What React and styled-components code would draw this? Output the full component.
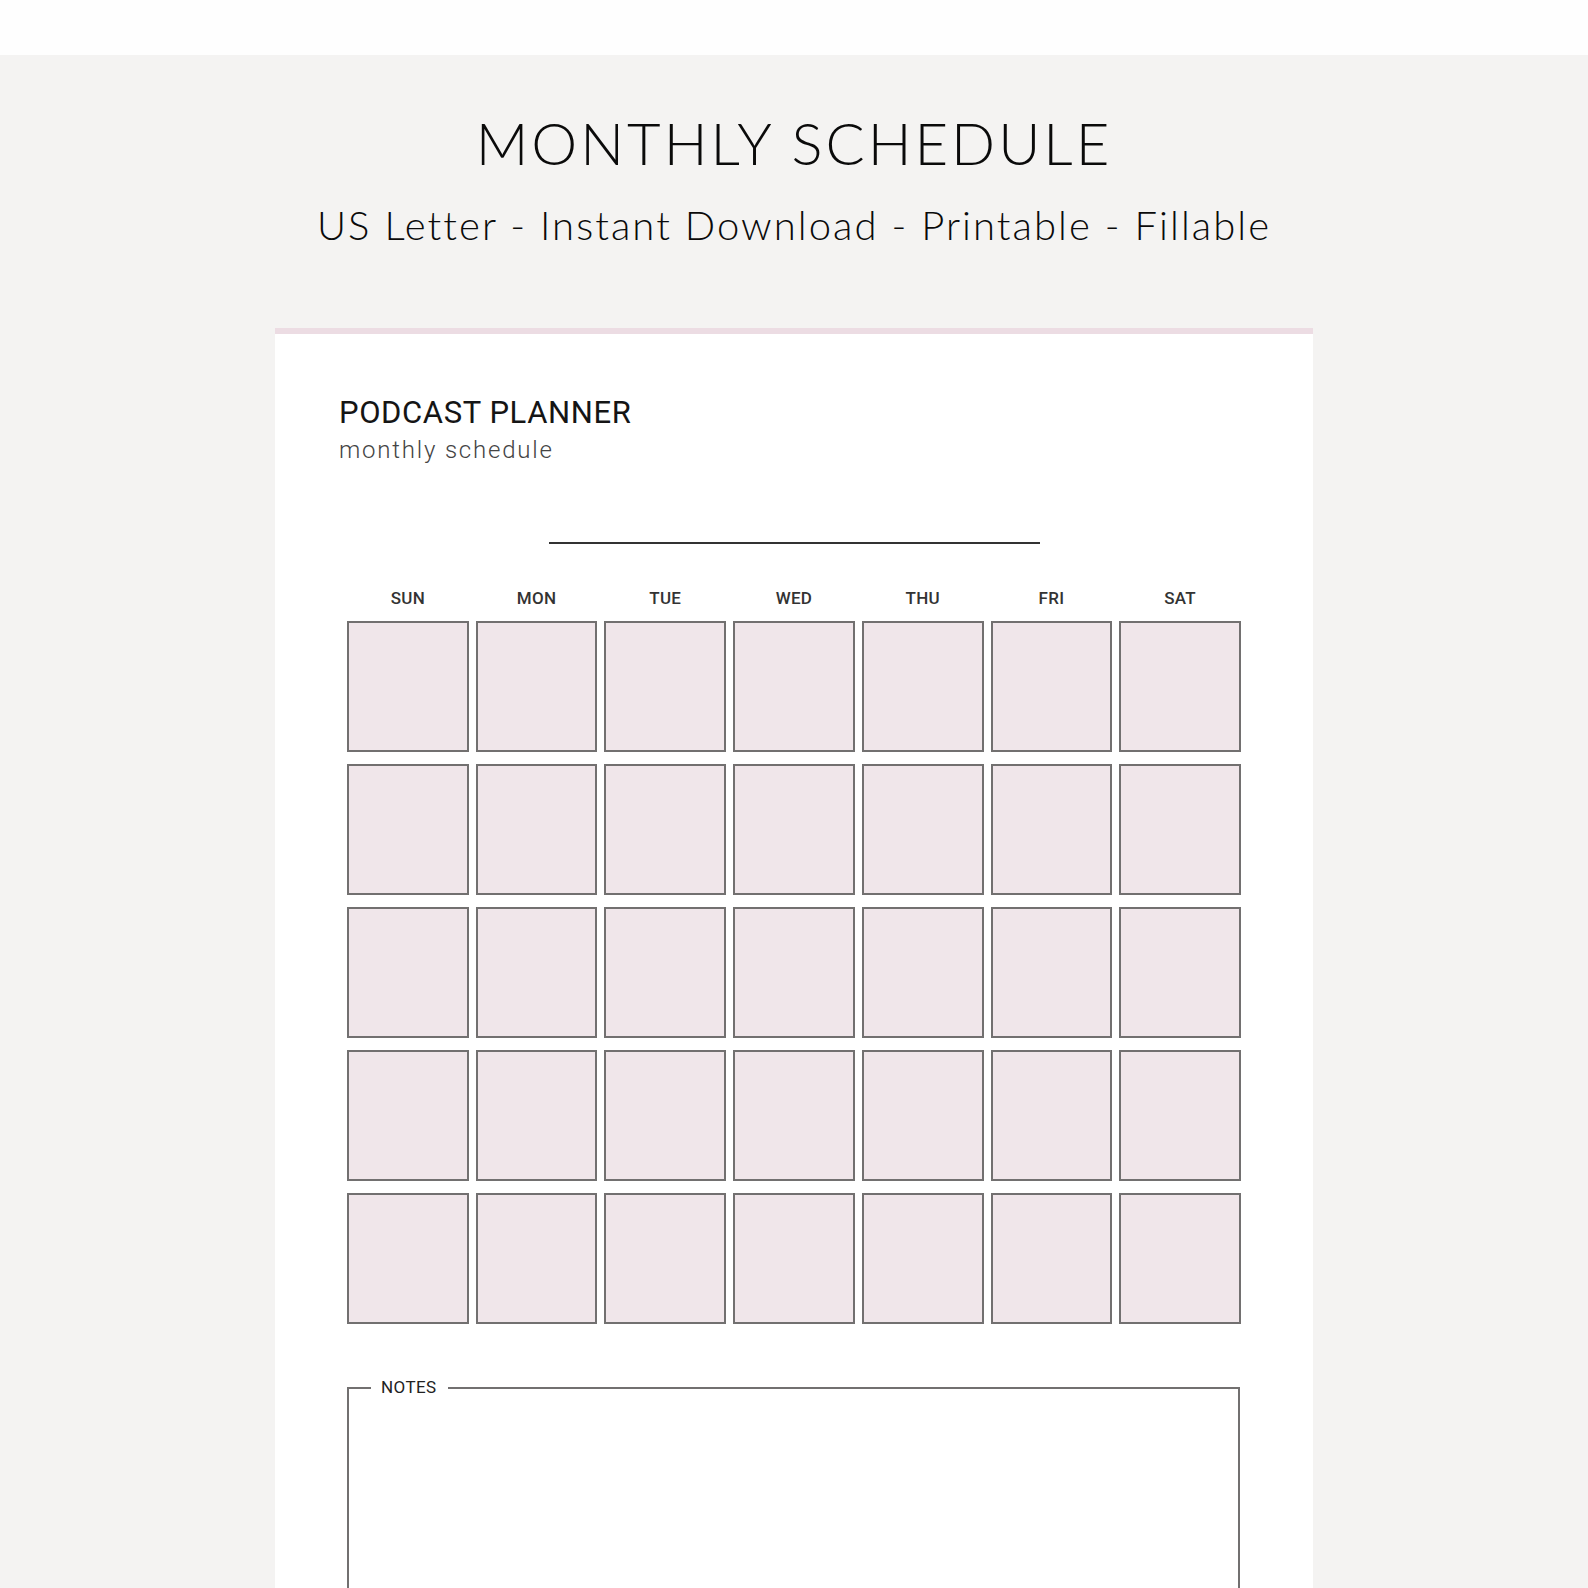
import React from "react";
import styled, { createGlobalStyle } from "styled-components";

const Global = createGlobalStyle`
  html, body { margin: 0; padding: 0; }
  body {
    width: 1588px;
    height: 1588px;
    overflow: hidden;
    background: #f4f3f2;
    font-family: Roboto, "Liberation Sans", sans-serif;
  }
  * { box-sizing: border-box; }
`;

const Page = styled.div`
  display: flex;
  flex-direction: column;
  width: 1588px;
  height: 1588px;
  overflow: hidden;
`;

const TopBand = styled.div`
  height: 55px;
  flex: 0 0 55px;
  background: #fefefe;
`;

const Stage = styled.main`
  flex: 1;
  background: #f4f3f2;
  display: flex;
  flex-direction: column;
  align-items: center;
  padding-top: 59px;
`;

const Headline = styled.h1`
  margin: 0;
  font-family: Lato, "Open Sans", sans-serif;
  font-weight: 300;
  font-size: 58px;
  line-height: 1;
  letter-spacing: 3px;
  color: #0a0a0a;
  white-space: nowrap;
`;

const Tagline = styled.p`
  margin: 33px 0 0;
  font-family: Lato, "Open Sans", sans-serif;
  font-weight: 300;
  font-size: 40px;
  line-height: 1;
  letter-spacing: 2.05px;
  color: #0a0a0a;
  white-space: nowrap;
`;

const Sheet = styled.section`
  margin-top: 83px;
  width: 1038px;
  flex: 1;
  background: #ffffff;
  border-top: 6px solid #ecdce3;
  padding: 63px 72px 0;
  display: flex;
  flex-direction: column;
`;

const TitleBlock = styled.div`
  margin-left: -8px;
  display: flex;
  flex-direction: column;
`;

const PlannerTitle = styled.h2`
  margin: 0;
  font-family: Roboto, sans-serif;
  font-weight: 400;
  font-size: 31px;
  line-height: 1;
  letter-spacing: 0.6px;
  color: #151515;
`;

const PlannerSub = styled.div`
  margin-top: 10px;
  font-family: Roboto, sans-serif;
  font-weight: 300;
  font-size: 24px;
  line-height: 1;
  letter-spacing: 1.8px;
  color: #444;
`;

const MonthLine = styled.div`
  align-self: center;
  margin-top: 80px;
  width: 491px;
  height: 2px;
  background: #333;
`;

const WeekHeader = styled.div`
  margin-top: 45px;
  display: grid;
  grid-template-columns: repeat(7, 1fr);
  column-gap: 7px;
`;

const DayName = styled.div`
  text-align: center;
  font-family: Roboto, sans-serif;
  font-weight: 500;
  font-size: 17px;
  line-height: 18px;
  letter-spacing: 0.3px;
  color: #333;
`;

const Calendar = styled.div`
  margin-top: 14px;
  display: grid;
  grid-template-columns: repeat(7, 1fr);
  grid-template-rows: repeat(5, 131px);
  column-gap: 7px;
  row-gap: 12px;
`;

const DayCell = styled.div`
  background: #f0e6ea;
  border: 2px solid #727070;
`;

const Notes = styled.fieldset`
  margin: 55px 1px 0 0;
  padding: 0 0 0 22px;
  height: 320px;
  border: 2px solid #727070;
  border-bottom: none;
  flex: 0 0 auto;
`;

const NotesLabel = styled.legend`
  padding: 0 11px 0 10px;
  font-family: Roboto, sans-serif;
  font-weight: 400;
  font-size: 17px;
  line-height: 1;
  letter-spacing: 0.4px;
  color: #222;
`;

const DAYS = ["SUN", "MON", "TUE", "WED", "THU", "FRI", "SAT"];

export default function App() {
  return (
    <Page>
      <Global />
      <TopBand />
      <Stage>
        <Headline>MONTHLY SCHEDULE</Headline>
        <Tagline>US Letter - Instant Download - Printable - Fillable</Tagline>
        <Sheet>
          <TitleBlock>
            <PlannerTitle>PODCAST PLANNER</PlannerTitle>
            <PlannerSub>monthly schedule</PlannerSub>
          </TitleBlock>
          <MonthLine />
          <WeekHeader>
            {DAYS.map((d) => (
              <DayName key={d}>{d}</DayName>
            ))}
          </WeekHeader>
          <Calendar>
            {Array.from({ length: 35 }, (_, i) => (
              <DayCell key={i} />
            ))}
          </Calendar>
          <Notes>
            <NotesLabel>NOTES</NotesLabel>
          </Notes>
        </Sheet>
      </Stage>
    </Page>
  );
}
